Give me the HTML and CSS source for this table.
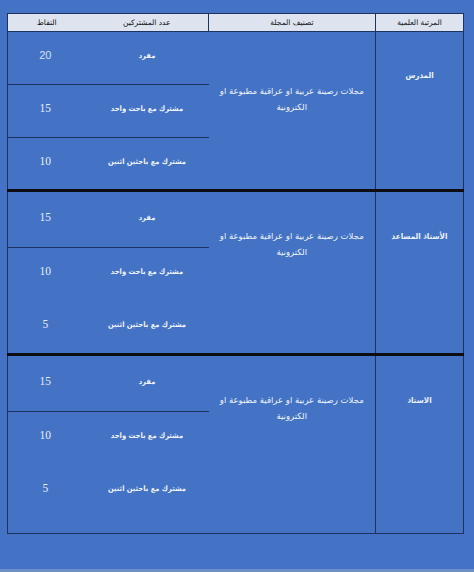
FILE: index.html
```html
<!DOCTYPE html>
<html lang="ar">
<head>
<meta charset="utf-8">
<title>جدول النقاط</title>
<link rel="stylesheet" href="styles.css">
</head>
<body>
<div class="page">
<table class="grid" dir="rtl">
<colgroup><col class="c-rank"><col class="c-journal"><col class="c-count"><col class="c-points"></colgroup>
<thead>
<tr><th class="h-rank">المرتبة العلمية</th><th class="h-journal">تصنيف المجلة</th><th class="h-count">عدد المشتركين</th><th class="h-points">النقاط</th></tr>
</thead>
<tbody class="group g1">
<tr class="r1 lined"><td rowspan="3" class="rank">المدرس</td><td rowspan="3" class="journal">مجلات رصينة عربية او عراقية مطبوعة او الكترونية</td><td class="count">مفرد</td><td class="pts sans">20</td></tr>
<tr class="r2 lined"><td class="count">مشترك مع باحث واحد</td><td class="pts">15</td></tr>
<tr class="r3"><td class="count">مشترك مع باحثين اثنين</td><td class="pts">10</td></tr>
</tbody>
<tbody class="group g2">
<tr class="r1 lined"><td rowspan="3" class="rank">الأستاذ المساعد</td><td rowspan="3" class="journal">مجلات رصينة عربية او عراقية مطبوعة او الكترونية</td><td class="count">مفرد</td><td class="pts">15</td></tr>
<tr class="r2"><td class="count">مشترك مع باحث واحد</td><td class="pts">10</td></tr>
<tr class="r3"><td class="count">مشترك مع باحثين اثنين</td><td class="pts">5</td></tr>
</tbody>
<tbody class="group g3">
<tr class="r1 lined"><td rowspan="3" class="rank">الاستاذ</td><td rowspan="3" class="journal">مجلات رصينة عربية او عراقية مطبوعة او الكترونية</td><td class="count">مفرد</td><td class="pts">15</td></tr>
<tr class="r2"><td class="count">مشترك مع باحث واحد</td><td class="pts">10</td></tr>
<tr class="r3 last"><td class="count">مشترك مع باحثين اثنين</td><td class="pts">5</td></tr>
</tbody>
</table>
</div>
</body>
</html>
```

FILE: styles.css
```css
html, body {
  margin: 0;
  padding: 0;
}
body {
  background: #4472c4;
  height: 572px;
  overflow: hidden;
  box-sizing: border-box;
  border-bottom: 3px solid #6f8fc9;
}
.page {
  padding: 13px 11px 0 7px;
}
.grid {
  border-collapse: collapse;
  table-layout: fixed;
  width: 456px;
  font-family: "DejaVu Sans", "Liberation Sans", sans-serif;
  border: 1px solid #1d3463;
}
.c-rank { width: 88px; }
.c-journal { width: 167px; }
.c-count { width: 123px; }
.c-points { width: 78px; }

.grid thead tr { height: 18px; }
.grid th {
  background: #dde3ef;
  color: #111;
  font-weight: normal;
  font-size: 7.5px;
  padding: 0;
  border: 1px solid #1d3463;
  text-align: center;
  vertical-align: middle;
}
.grid th.h-count { border-left: 0; }
.grid th.h-points { border-right: 0; }

.grid td {
  padding: 0;
  text-align: center;
  vertical-align: top;
  color: #eef2fa;
  border: 0;
}
.group + .group {
  border-top: 3px solid #0d0d12;
}
.grid tbody tr { height: 53px; }
.g2 tr.r1, .g3 tr.r1 { height: 57px; }
.g2 tr.r3 { height: 54px; }
.grid tbody tr.last { height: 69px; }

.grid tr.lined td.count, .grid tr.lined td.pts {
  border-bottom: 1px solid #1d3463;
}
.grid td.count {
  font-family: "DejaVu Sans Condensed", "DejaVu Sans", sans-serif;
  font-size: 7.5px;
  font-weight: bold;
  padding-top: 19px;
}
.grid td.pts {
  font-family: "Liberation Serif", serif;
  font-size: 11.5px;
  padding: 17px 3px 0 0;
  color: #e6ecf7;
}
.g2 .r1 td.count, .g3 .r1 td.count { padding-top: 21px; }
.g2 .r1 td.pts, .g3 .r1 td.pts { padding-top: 19px; }
.grid td.pts.sans {
  font-family: "Liberation Sans", sans-serif;
  font-size: 11px;
  color: #d6e0f2;
}
.grid td.rank {
  border-left: 1px solid #1d3463;
  font-family: "DejaVu Sans Condensed", "DejaVu Sans", sans-serif;
  font-size: 8px;
  font-weight: bold;
  padding-top: 39px;
}
.g2 td.rank, .g3 td.rank { padding-top: 40px; }
.grid td.journal {
  font-size: 8.5px;
  line-height: 16px;
  padding: 51px 6px 0;
}
.g2 td.journal, .g3 td.journal { padding-top: 36px; }
```
